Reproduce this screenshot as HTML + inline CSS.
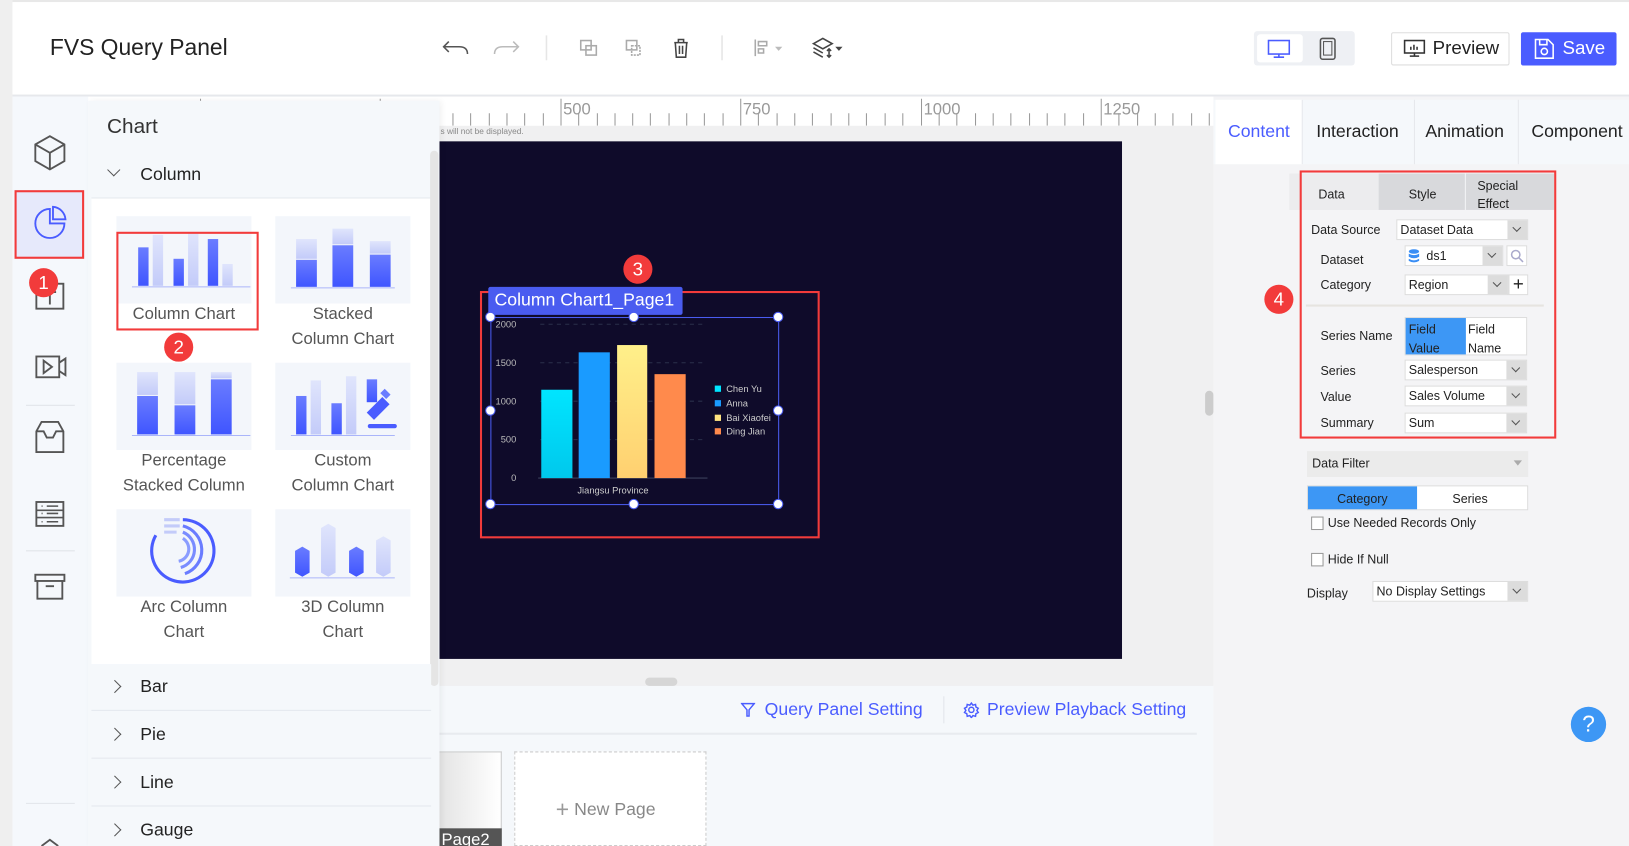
<!DOCTYPE html>
<html><head><meta charset="utf-8">
<style>
*{box-sizing:border-box;margin:0;padding:0}
html,body{width:1629px;height:846px;overflow:hidden;background:#fff;font-family:"Liberation Sans",sans-serif;color:#222}
#w{position:absolute;left:0;top:0;width:1568px;height:814px;transform:scale(1.0389,1.0393);transform-origin:0 0;overflow:hidden;background:#fff}
.a{position:absolute}
.t{position:absolute;white-space:nowrap}
.badge{position:absolute;width:28px;height:28px;border-radius:50%;background:#f23b3b;color:#fff;font-size:18px;text-align:center;line-height:28px}
.card{position:absolute;width:130px;height:84px;background:#f3f6fb}
.lbl{position:absolute;width:150px;text-align:center;font-size:16px;color:#555;line-height:24px}
.row{position:absolute;left:88px;width:327px;height:45px;background:#f5f8fb;border-bottom:1px solid #e4e8ee;font-size:17px}
.row span{position:absolute;left:47px;top:12px}
.row i{position:absolute;left:18px;top:17px;width:9px;height:9px;border-right:1.5px solid #555;border-top:1.5px solid #555;transform:rotate(45deg)}
.f{font-size:12px;color:#222}
.sel{position:absolute;height:20px;background:#fff;border:1px solid #ddd;font-size:12px;line-height:18px;padding-left:3px}
.sel b{position:absolute;right:0;top:0;width:19px;height:18px;background:#dcdcdc;font-weight:normal}
.sel b:after{content:"";position:absolute;left:6px;top:4px;width:5px;height:5px;border-right:1px solid #555;border-bottom:1px solid #555;transform:rotate(45deg)}
.hd{position:absolute;width:10px;height:10px;border-radius:50%;background:#fff;border:1.5px solid #4a5cf0}
</style></head><body><div id="w">
<div class="a" style="left:0;top:0;width:1568px;height:2px;background:#e8e8e8"></div>
<div class="a" style="left:0;top:0;width:12px;height:814px;background:#efefef"></div>
<div class="a" style="left:12px;top:91px;width:1556px;height:2px;background:#e6e8ec"></div>
<div class="t" style="left:48px;top:33px;font-size:22px;color:#222">FVS Query Panel</div>
<svg class="a" style="left:420px;top:30px" width="410" height="32" fill="none" stroke-width="1.5">
 <path d="M12 10 L7 15 L12 20 M7 15 H22 Q30 15 30 22" stroke="#555"/>
 <path d="M74 10 L79 15 L74 20 M79 15 H64 Q56 15 56 22" stroke="#bbb"/>
 <line x1="106" y1="4" x2="106" y2="28" stroke="#e6e6e6"/>
 <rect x="139" y="9" width="10" height="9" stroke="#aaa"/><rect x="144" y="14" width="10" height="9" stroke="#aaa"/>
 <rect x="183" y="9" width="10" height="9" stroke="#aaa"/><rect x="188" y="14" width="8" height="9" stroke="#aaa" stroke-dasharray="2 1"/>
 <path d="M229 11 H242 M233 11 V8 H238 V11 M230 11 L231 25 H240 L241 11 M234 14 V22 M237 14 V22" stroke="#444"/>
 <line x1="275" y1="4" x2="275" y2="28" stroke="#e6e6e6"/>
 <path d="M307 8 V24 M310 10 H318 V14 H310 Z M310 17 H315 V21 H310 Z" stroke="#aaa"/>
 <path d="M326 15 L333 15 L329.5 19 Z" fill="#bbb" stroke="none"/>
 <path d="M363 12 L372 7 L381 12 L372 17 Z M363 16 L372 21 M363 20 L372 25" stroke="#444"/>
 <path d="M378 17 V25 M376 19 L378 17 L380 19 M376 23 L378 25 L380 23" stroke="#444"/>
 <path d="M384 15 L391 15 L387.5 19 Z" fill="#444" stroke="none"/>
</svg>
<div class="a" style="left:1207px;top:30px;width:97px;height:33px;background:#eef0f4;border-radius:3px"></div>
<div class="a" style="left:1210px;top:33px;width:44px;height:27px;background:#fff;border-radius:3px"></div>
<svg class="a" style="left:1218px;top:36px" width="80" height="22" fill="none" stroke-width="1.5">
 <rect x="3" y="3" width="20" height="13" stroke="#4a5cff"/><path d="M8 19 H18 M13 16 V19" stroke="#4a5cff"/>
 <rect x="53" y="1" width="14" height="20" rx="2" stroke="#555"/><rect x="56" y="4" width="8" height="13" stroke="#555" stroke-width="1"/>
</svg>
<div class="a" style="left:1339px;top:31px;width:114px;height:32px;border:1px solid #ddd;border-radius:2px;background:#fff"></div>
<svg class="a" style="left:1350px;top:37px" width="24" height="20" fill="none" stroke="#333" stroke-width="1.5"><rect x="2" y="2" width="19" height="12"/><path d="M7 17 H16 M11.5 14 V17 M8 11 V8 M11 11 V6 M14 11 V8"/></svg>
<div class="t" style="left:1379px;top:36px;font-size:18px;color:#222">Preview</div>
<div class="a" style="left:1464px;top:31px;width:92px;height:32px;background:#4a5cff;border-radius:2px"></div>
<svg class="a" style="left:1475px;top:36px" width="22" height="22" fill="none" stroke="#fff" stroke-width="1.5"><path d="M3 2 H15 L20 7 V20 H3 Z M7 2 V7 H14 V2"/><circle cx="11.5" cy="13.5" r="3"/></svg>
<div class="t" style="left:1504px;top:36px;font-size:18px;color:#fff">Save</div>

<div class="a" style="left:12px;top:93px;width:73px;height:721px;background:#f5f8fc"></div>
<div class="a" style="left:14px;top:183px;width:67px;height:66px;background:#e6e9fb;border:2px solid #f23b3b"></div>
<svg class="a" style="left:12px;top:93px" width="73" height="721" fill="none" stroke="#555" stroke-width="1.8">
 <path d="M36 38 L50 46 V62 L36 70 L22 62 V46 Z M22 46 L36 54 L50 46 M36 54 V70"/>
 <path d="M36 108 A14 14 0 1 0 50 122 H36 Z" stroke="#4a5cff"/><path d="M39 106 A13 13 0 0 1 51 118 H39 Z" stroke="#4a5cff"/>
 <rect x="23" y="180" width="26" height="24"/><path d="M30 188 H42 M36 188 V200"/>
 <rect x="23" y="250" width="22" height="20"/><path d="M30 254 L38 260 L30 266 Z M45 256 L51 252 V268 L45 264"/>
 <line x1="13" y1="297" x2="60" y2="297" stroke="#e2e5ea" stroke-width="1"/>
 <path d="M23 322 L28 313 H44 L49 322 V342 H23 Z M23 322 H30 L33 328 H39 L42 322 H49"/>
 <rect x="23" y="390" width="26" height="23"/><path d="M23 398 H49 M23 405 H49 M28 394 H29 M28 401 H29 M28 409 H29 M33 394 H44 M33 401 H44 M33 409 H44" stroke-width="1.5"/>
 <line x1="13" y1="437" x2="60" y2="437" stroke="#e2e5ea" stroke-width="1"/>
 <rect x="22" y="460" width="28" height="6"/><path d="M24 466 V483 H48 V466 M32 471 H40"/>
 <line x1="13" y1="680" x2="60" y2="680" stroke="#e2e5ea" stroke-width="1"/>
 <path d="M28 721 L36 715 L44 721"/>
</svg>
<div class="badge" style="left:28px;top:258px">1</div>

<div class="a" style="left:85px;top:93px;width:1083px;height:28px;background:#fff"></div>
<svg class="a" style="left:85px;top:93px" width="1083" height="28">
 <g stroke="#999" stroke-width="1">
  <path d="M455 2 V28 M628 2 V28 M802 2 V28 M975 2 V28 M108 2 V10 M281 2 V10"/>
  <path d="M351 16 V28 M368 16 V28 M386 16 V28 M403 16 V28 M420 16 V28 M438 16 V28 M472 16 V28 M490 16 V28 M507 16 V28 M524 16 V28 M541 16 V28 M559 16 V28 M576 16 V28 M593 16 V28 M611 16 V28 M645 16 V28 M663 16 V28 M680 16 V28 M697 16 V28 M715 16 V28 M732 16 V28 M749 16 V28 M767 16 V28 M784 16 V28 M819 16 V28 M836 16 V28 M854 16 V28 M871 16 V28 M888 16 V28 M906 16 V28 M923 16 V28 M940 16 V28 M958 16 V28 M992 16 V28 M1010 16 V28 M1027 16 V28 M1044 16 V28 M1062 16 V28 M1079 16 V28"/>
 </g>
 <g font-family="Liberation Sans" font-size="16" fill="#999"><text x="457" y="17">500</text><text x="630" y="17">750</text><text x="804" y="17">1000</text><text x="977" y="17">1250</text></g>
</svg>
<div class="a" style="left:423px;top:121px;width:745px;height:539px;background:#f0f0f1"></div>
<div class="t" style="left:424px;top:122px;font-size:8px;color:#888">s will not be displayed.</div>
<div class="a" style="left:423px;top:136px;width:657px;height:498px;background:#0f0b2a"></div>
<div class="a" style="left:1160px;top:376px;width:8px;height:24px;background:#ccc;border-radius:4px"></div>
<div class="a" style="left:621px;top:652px;width:31px;height:8px;background:#d6d6d6;border-radius:4px"></div>

<div class="a" style="left:462px;top:280px;width:327px;height:238px;border:2.5px solid #f23b3b"></div>
<div class="a" style="left:470px;top:276px;width:187px;height:27px;background:#4a5cf0;border-radius:2px"></div>
<div class="t" style="left:476px;top:279px;font-size:17px;color:#fff">Column Chart1_Page1</div>
<div class="a" style="left:472px;top:305px;width:278px;height:181px;border:1.5px solid #4a5cf0"></div>
<svg class="a" style="left:470px;top:300px" width="290" height="190" font-family="Liberation Sans">
 <g stroke="#2a2f4a" stroke-dasharray="4 4"><path d="M50 12 H210 M50 49 H210 M50 86 H210 M50 123 H210"/></g>
 <path d="M48 160 H211" stroke="#3a3f5a"/>
 <g font-size="9" fill="#bbb" text-anchor="end"><text x="27" y="15">2000</text><text x="27" y="52">1500</text><text x="27" y="89">1000</text><text x="27" y="126">500</text><text x="27" y="163">0</text></g>
 <defs>
  <linearGradient id="g1" x1="0" y1="0" x2="0" y2="1"><stop offset="0" stop-color="#00e5ff"/><stop offset="1" stop-color="#00c8ec"/></linearGradient>
  <linearGradient id="g3" x1="0" y1="0" x2="0" y2="1"><stop offset="0" stop-color="#fff08a"/><stop offset="1" stop-color="#ffd070"/></linearGradient>
 </defs>
 <rect x="51" y="75" width="30" height="85" fill="url(#g1)"/>
 <rect x="87" y="39" width="30" height="121" fill="#1a9bff"/>
 <rect x="124" y="32" width="29" height="128" fill="url(#g3)"/>
 <rect x="160" y="60" width="30" height="100" fill="#ff8a4c"/>
 <g font-size="9" fill="#ccc"><rect x="218" y="71" width="6" height="6" fill="#00e5ff"/><text x="229" y="77">Chen Yu</text>
 <rect x="218" y="85" width="6" height="6" fill="#1a9bff"/><text x="229" y="91">Anna</text>
 <rect x="218" y="99" width="6" height="6" fill="#ffe480"/><text x="229" y="105">Bai Xiaofei</text>
 <rect x="218" y="112" width="6" height="6" fill="#ff8a4c"/><text x="229" y="118">Ding Jian</text>
 <text x="120" y="175" text-anchor="middle">Jiangsu Province</text></g>
</svg>
<div class="hd" style="left:467px;top:300px"></div><div class="hd" style="left:605px;top:300px"></div><div class="hd" style="left:744px;top:300px"></div>
<div class="hd" style="left:467px;top:390px"></div><div class="hd" style="left:744px;top:390px"></div>
<div class="hd" style="left:467px;top:480px"></div><div class="hd" style="left:605px;top:480px"></div><div class="hd" style="left:744px;top:480px"></div>
<div class="badge" style="left:600px;top:245px">3</div>

<div class="a" style="left:423px;top:660px;width:745px;height:154px;background:#f5f8fb"></div>
<svg class="a" style="left:713px;top:675px" width="14" height="16" fill="none" stroke="#4a5cff" stroke-width="1.4"><path d="M1 2 H13 L8 8 V14 L6 14 V8 Z"/></svg>
<div class="t" style="left:736px;top:673px;font-size:17px;color:#4a5cff">Query Panel Setting</div>
<div class="a" style="left:908px;top:670px;width:1px;height:26px;background:#e2e5ea"></div>
<svg class="a" style="left:927px;top:675px" width="16" height="16" fill="none" stroke="#4a5cff" stroke-width="1.4"><circle cx="8" cy="8" r="2.5"/><path d="M8 1.5 L9.5 3.5 L12 2.8 L12.4 5.3 L14.6 6.5 L13.3 8.5 L14.6 10.5 L12.4 11.7 L12 14.2 L9.5 13.5 L8 15.5 L6.5 13.5 L4 14.2 L3.6 11.7 L1.4 10.5 L2.7 8.5 L1.4 6.5 L3.6 5.3 L4 2.8 L6.5 3.5 Z"/></svg>
<div class="t" style="left:950px;top:673px;font-size:17px;color:#4a5cff">Preview Playback Setting</div>
<div class="a" style="left:423px;top:705px;width:729px;height:2px;background:#e8ebef"></div>
<div class="a" style="left:423px;top:723px;width:60px;height:91px;background:linear-gradient(90deg,#e4e4e4,#fff);border:1px solid #ccc;border-left:none"></div>
<div class="a" style="left:423px;top:797px;width:60px;height:17px;background:#555"></div>
<div class="t" style="left:425px;top:800px;font-size:16px;color:#fff">Page2</div>
<div class="a" style="left:495px;top:723px;width:185px;height:91px;background:#fff;border:1px dashed #ccc"></div>
<div class="t" style="left:535px;top:764px;font-size:17px;color:#888"><span style="font-size:22px;color:#999;position:relative;top:2px">+</span> New Page</div>

<div class="a" style="left:85px;top:97px;width:338px;height:717px;background:#f5f8fb;box-shadow:2px 0 6px rgba(0,0,0,.06)"></div>
<div class="t" style="left:103px;top:111px;font-size:20px;color:#333">Chart</div>
<div class="a" style="left:88px;top:145px;width:327px;height:46px;background:#f5f8fb;border-bottom:1px solid #e4e8ee"></div>
<div class="a" style="left:105px;top:159px;width:9px;height:9px;border-right:1.5px solid #555;border-bottom:1.5px solid #555;transform:rotate(45deg)"></div>
<div class="t" style="left:135px;top:158px;font-size:17px;color:#222">Column</div>
<div class="a" style="left:88px;top:191px;width:327px;height:448px;background:#fff"></div>
<div class="a" style="left:414px;top:145px;width:8px;height:515px;background:#e5e5e5;border-radius:4px"></div>

<div class="card" style="left:112px;top:208px"></div>
<div class="card" style="left:265px;top:208px"></div>
<div class="card" style="left:112px;top:349px"></div>
<div class="card" style="left:265px;top:349px"></div>
<div class="card" style="left:112px;top:490px"></div>
<div class="card" style="left:265px;top:490px"></div>
<svg class="a" style="left:112px;top:208px" width="290" height="370">
 <defs>
  <linearGradient id="bd" x1="0" y1="0" x2="0" y2="1"><stop offset="0" stop-color="#6a7cff"/><stop offset="1" stop-color="#3f55ff"/></linearGradient>
  <linearGradient id="bl" x1="0" y1="0" x2="0" y2="1"><stop offset="0" stop-color="#e0e5fc"/><stop offset="1" stop-color="#c3cbf9"/></linearGradient>
 </defs>
 <rect x="21" y="30" width="10" height="37" fill="url(#bd)"/><rect x="35" y="18" width="10" height="49" fill="url(#bl)"/>
 <rect x="55" y="41" width="10" height="26" fill="url(#bd)"/><rect x="69" y="16" width="10" height="51" fill="url(#bl)"/>
 <rect x="88" y="22" width="10" height="45" fill="url(#bd)"/><rect x="102" y="46" width="10" height="21" fill="url(#bl)"/>
 <path d="M15 68 H129" stroke="#aab5fa"/>
 <rect x="173" y="42" width="20" height="26" fill="url(#bd)"/><rect x="173" y="22" width="20" height="19" fill="url(#bl)"/>
 <rect x="208" y="28" width="20" height="40" fill="url(#bd)"/><rect x="208" y="12" width="20" height="15" fill="url(#bl)"/>
 <rect x="244" y="37" width="20" height="31" fill="url(#bd)"/><rect x="244" y="24" width="20" height="12" fill="url(#bl)"/>
 <path d="M168 69 H268" stroke="#aab5fa"/>
 <g transform="translate(0,48)">
 <rect x="20" y="102" width="20" height="22" fill="url(#bl)"/><rect x="20" y="125" width="20" height="37" fill="url(#bd)"/>
 <rect x="56" y="102" width="20" height="31" fill="url(#bl)"/><rect x="56" y="134" width="20" height="28" fill="url(#bd)"/>
 <rect x="91" y="102" width="20" height="6" fill="url(#bl)"/><rect x="91" y="109" width="20" height="53" fill="url(#bd)"/>
 <path d="M15 163 H129" stroke="#aab5fa"/>
 <rect x="173" y="125" width="10" height="37" fill="url(#bd)"/><rect x="187" y="110" width="10" height="52" fill="url(#bl)"/>
 <rect x="207" y="132" width="10" height="30" fill="url(#bd)"/><rect x="221" y="106" width="10" height="56" fill="url(#bl)"/>
 <rect x="241" y="109" width="10" height="22" fill="url(#bd)"/><path d="M241 141 L256 126 L263 133 L248 148 Z" fill="#4a5cff"/><rect x="255" y="120" width="8" height="6" transform="rotate(45 259 123)" fill="#6a7cff"/>
 <rect x="242" y="152" width="28" height="4" rx="2" fill="#4a5cff"/>
 <path d="M168 163 H268" stroke="#aab5fa"/>
 </g>
 <g fill="none" stroke-width="3" transform="translate(6,274)">
  <path d="M58 18 A30 30 0 1 1 32 33" stroke="#4a5cff"/>
  <path d="M58 24 A24 24 0 0 1 60 70" stroke="#6a7cff"/>
  <path d="M58 30 A18 18 0 0 1 56 64" stroke="#7a8cff"/>
  <path d="M58 36 A12 12 0 0 1 54 58" stroke="#8a9cff"/>
  <path d="M40 18 H55 M40 24 H55 M40 30 H52" stroke="#c3cbf9"/>
 </g>
 <g>
  <path d="M172 322 L179 318 L186 322 V343 L179 347 L172 343 Z" fill="url(#bd)"/>
  <path d="M197 300 L204 296 L211 300 V343 L204 347 L197 343 Z" fill="url(#bl)"/>
  <path d="M224 322 L231 318 L238 322 V343 L231 347 L224 343 Z" fill="url(#bd)"/>
  <path d="M250 312 L257 308 L264 312 V343 L257 347 L250 343 Z" fill="url(#bl)"/>
  <path d="M167 348 H268" stroke="#aab5fa"/>
 </g>
</svg>
<div class="a" style="left:112px;top:223px;width:137px;height:95px;border:2.5px solid #f23b3b"></div>
<div class="lbl" style="left:102px;top:291px">Column Chart</div>
<div class="badge" style="left:158px;top:320px">2</div>
<div class="lbl" style="left:255px;top:291px">Stacked<br>Column Chart</div>
<div class="lbl" style="left:102px;top:432px">Percentage<br>Stacked Column</div>
<div class="lbl" style="left:255px;top:432px">Custom<br>Column Chart</div>
<div class="lbl" style="left:102px;top:573px">Arc Column<br>Chart</div>
<div class="lbl" style="left:255px;top:573px">3D Column<br>Chart</div>
<div class="row" style="top:639px"><i></i><span>Bar</span></div>
<div class="row" style="top:685px"><i></i><span>Pie</span></div>
<div class="row" style="top:731px"><i></i><span>Line</span></div>
<div class="row" style="top:777px"><i></i><span>Gauge</span></div>

<div class="a" style="left:1168px;top:93px;width:400px;height:721px;background:#f4f4f6"></div>
<div class="a" style="left:1168px;top:96px;width:400px;height:62px;background:#f5f8fb"></div>
<div class="a" style="left:1170px;top:96px;width:84px;height:62px;background:#fff"></div>
<div class="a" style="left:1253px;top:96px;width:1px;height:62px;background:#e6e8ec"></div>
<div class="a" style="left:1361px;top:96px;width:1px;height:62px;background:#e6e8ec"></div>
<div class="a" style="left:1461px;top:96px;width:1px;height:62px;background:#e6e8ec"></div>
<div class="t" style="left:1182px;top:117px;font-size:17px;color:#4a5cff">Content</div>
<div class="t" style="left:1267px;top:117px;font-size:17px">Interaction</div>
<div class="t" style="left:1372px;top:117px;font-size:17px">Animation</div>
<div class="t" style="left:1474px;top:117px;font-size:17px">Component</div>

<div class="a" style="left:1241px;top:167px;width:86px;height:35px;background:#ececee"></div>
<div class="a" style="left:1327px;top:167px;width:83px;height:35px;background:#d8d9dc"></div>
<div class="a" style="left:1411px;top:167px;width:85px;height:35px;background:#d8d9dc"></div>
<div class="t f" style="left:1269px;top:180px">Data</div>
<div class="t f" style="left:1356px;top:180px">Style</div>
<div class="t f" style="left:1422px;top:171px;line-height:17px">Special<br>Effect</div>
<div class="t f" style="left:1262px;top:214px">Data Source</div>
<div class="sel" style="left:1344px;top:211px;width:127px">Dataset Data<b></b></div>
<div class="t f" style="left:1271px;top:243px">Dataset</div>
<div class="sel" style="left:1352px;top:236px;width:95px;padding-left:20px">ds1<b></b></div>
<svg class="a" style="left:1355px;top:239px" width="12" height="14"><ellipse cx="6" cy="3" rx="5" ry="2.2" fill="#3a8ef5"/><path d="M1 5 Q6 8 11 5 V8 Q6 11 1 8 Z M1 10 Q6 13 11 10 V12 Q6 15 1 12 Z" fill="#3a8ef5"/></svg>
<div class="a" style="left:1450px;top:236px;width:20px;height:20px;background:#fff;border:1px solid #ddd"></div>
<svg class="a" style="left:1453px;top:239px" width="14" height="14" fill="none" stroke="#aac" stroke-width="1.5"><circle cx="6" cy="6" r="4"/><path d="M9 9 L13 13"/></svg>
<div class="t f" style="left:1271px;top:267px">Category</div>
<div class="sel" style="left:1352px;top:264px;width:100px">Region<b></b></div>
<div class="a" style="left:1452px;top:264px;width:19px;height:20px;background:#fff;border:1px solid #ddd;font-size:18px;line-height:17px;text-align:center">+</div>
<div class="badge" style="left:1217px;top:274px">4</div>
<div class="a" style="left:1257px;top:293px;width:229px;height:2px;background:#e6e4e0"></div>
<div class="t f" style="left:1271px;top:316px">Series Name</div>
<div class="a" style="left:1352px;top:305px;width:118px;height:37px;background:#fff;border:1px solid #ddd"></div>
<div class="a" style="left:1353px;top:306px;width:58px;height:35px;background:#3d97f5"></div>
<div class="t f" style="left:1356px;top:308px;line-height:18px">Field<br>Value</div>
<div class="t f" style="left:1413px;top:308px;line-height:18px">Field<br>Name</div>
<div class="t f" style="left:1271px;top:350px">Series</div>
<div class="sel" style="left:1352px;top:346px;width:118px">Salesperson<b></b></div>
<div class="t f" style="left:1271px;top:375px">Value</div>
<div class="sel" style="left:1352px;top:371px;width:118px">Sales Volume<b></b></div>
<div class="t f" style="left:1271px;top:400px">Summary</div>
<div class="sel" style="left:1352px;top:397px;width:118px">Sum<b></b></div>
<div class="a" style="left:1251px;top:164px;width:247px;height:258px;border:2.5px solid #f23b3b"></div>

<div class="a" style="left:1258px;top:434px;width:213px;height:25px;background:#ebebeb"></div>
<div class="t f" style="left:1263px;top:439px">Data Filter</div>
<div class="a" style="left:1457px;top:443px;border:4px solid transparent;border-top:5px solid #aaa"></div>
<div class="a" style="left:1258px;top:467px;width:213px;height:24px;background:#fff;border:1px solid #ddd"></div>
<div class="a" style="left:1259px;top:468px;width:105px;height:22px;background:#3d97f5"></div>
<div class="t f" style="left:1287px;top:473px">Category</div>
<div class="t f" style="left:1398px;top:473px">Series</div>
<div class="a" style="left:1262px;top:497px;width:12px;height:13px;border:1px solid #999;background:#fff"></div>
<div class="t f" style="left:1278px;top:496px">Use Needed Records Only</div>
<div class="a" style="left:1262px;top:532px;width:12px;height:13px;border:1px solid #999;background:#fff"></div>
<div class="t f" style="left:1278px;top:531px">Hide If Null</div>
<div class="t f" style="left:1258px;top:564px">Display</div>
<div class="sel" style="left:1321px;top:559px;width:150px">No Display Settings<b></b></div>
<div class="a" style="left:1512px;top:680px;width:34px;height:34px;border-radius:50%;background:#3d97f5;color:#fff;font-size:22px;text-align:center;line-height:34px">?</div>
</div></body></html>
